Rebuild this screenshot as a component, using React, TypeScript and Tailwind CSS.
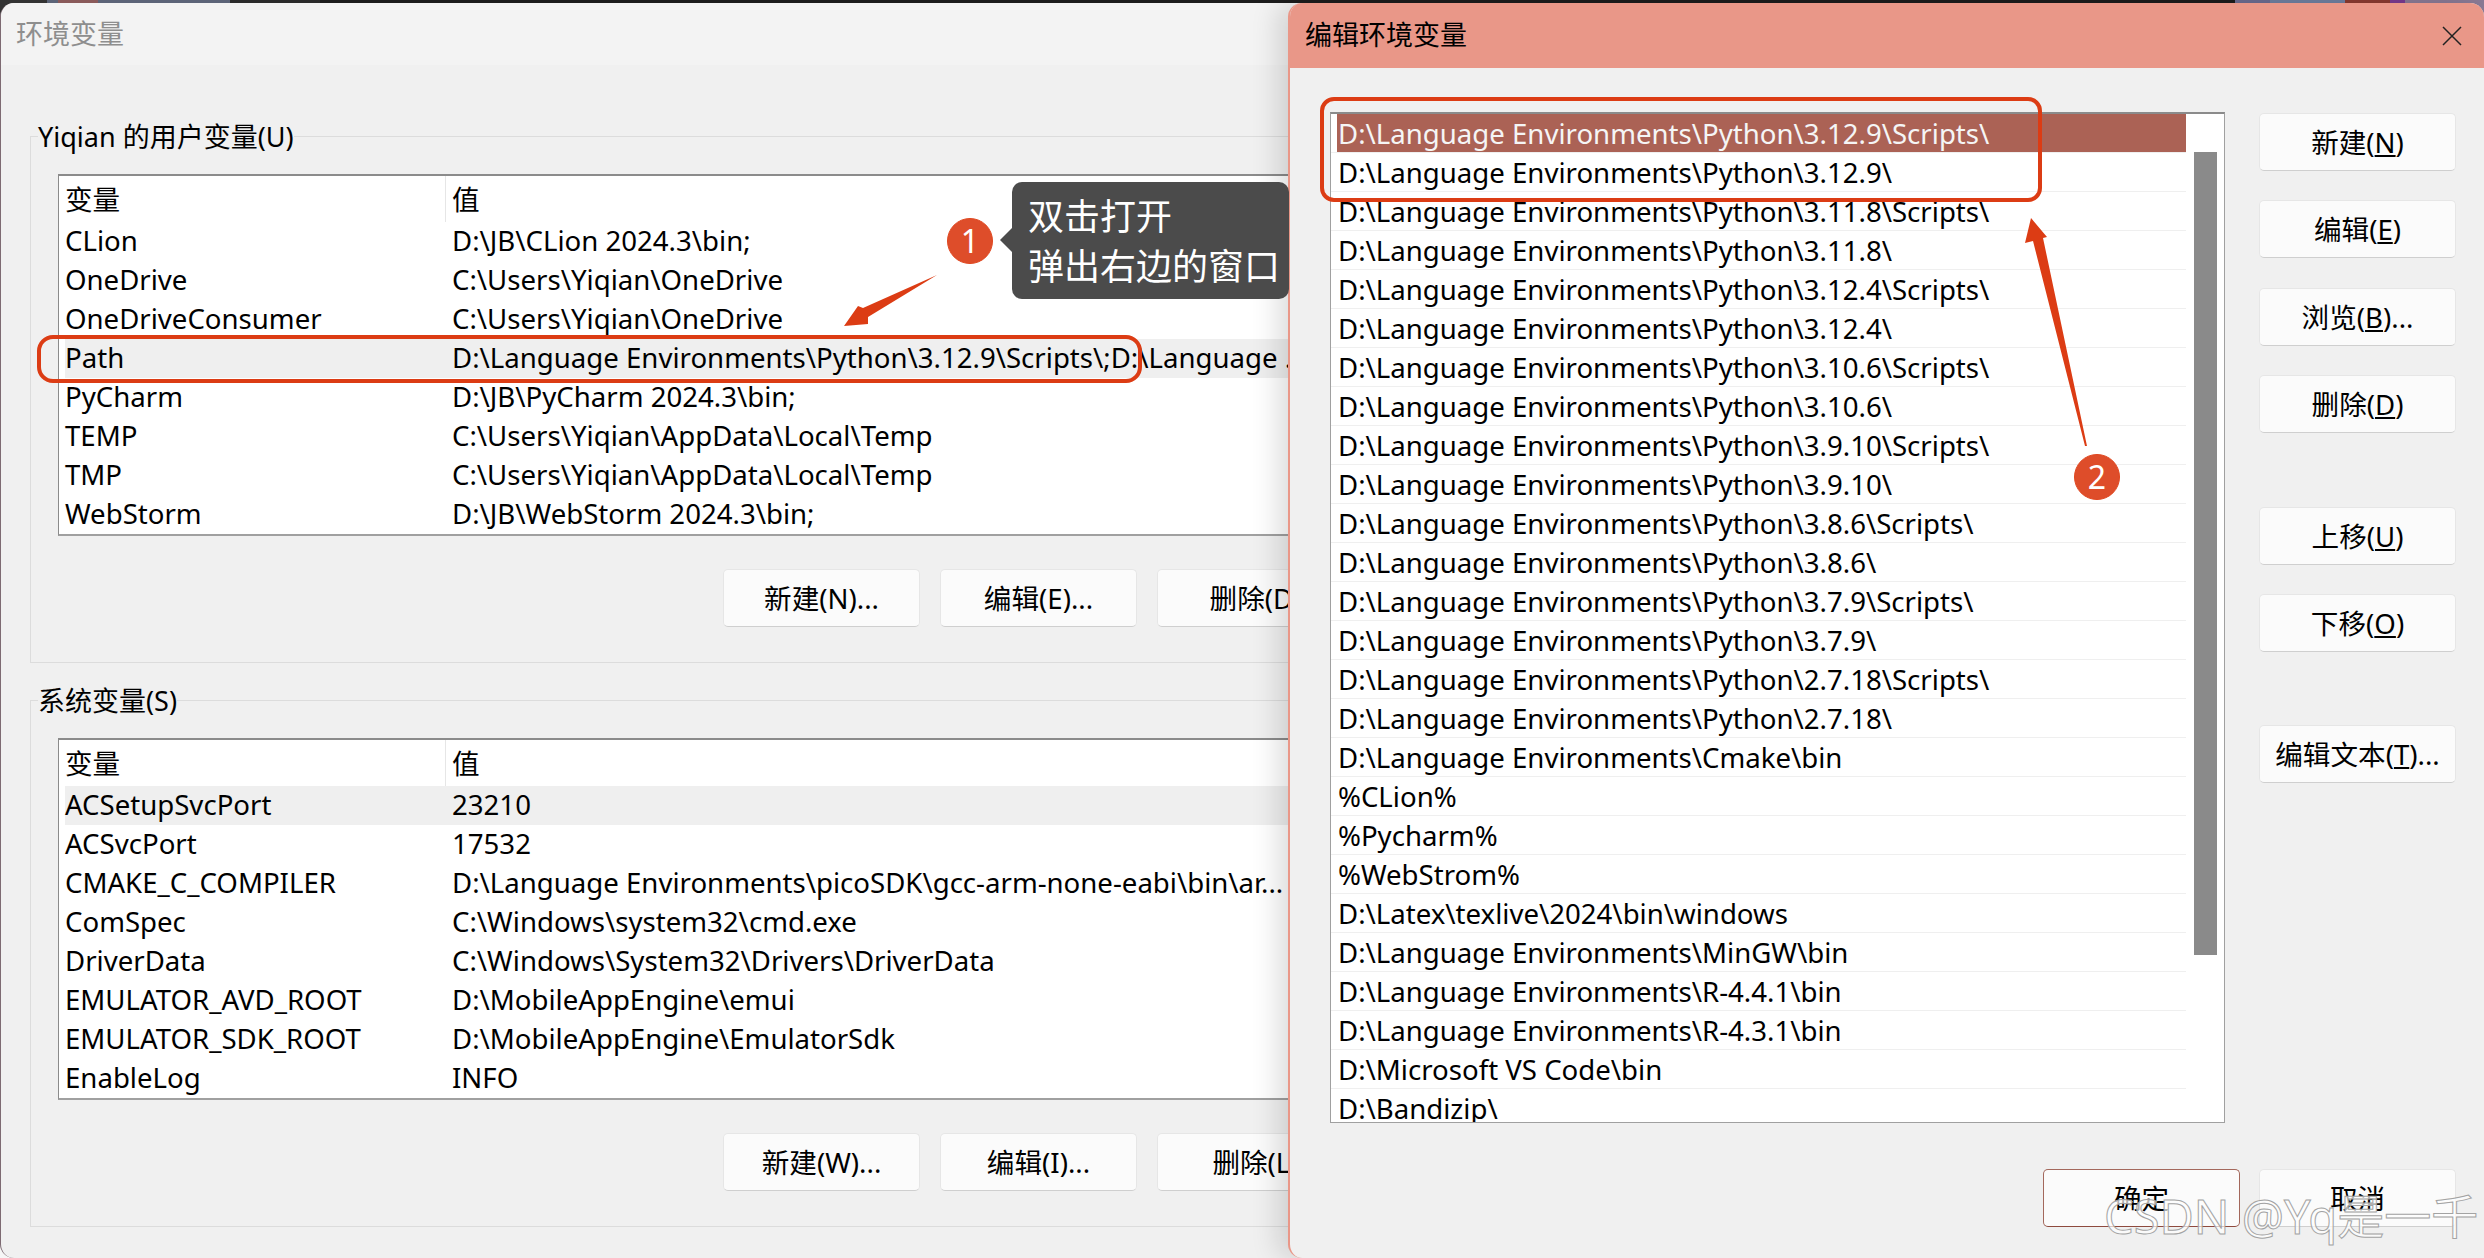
const font = "font-['Noto_Sans','Noto_Sans_CJK_SC',sans-serif]";

const userVars = [
  ["CLion", "D:\\JB\\CLion 2024.3\\bin;"],
  ["OneDrive", "C:\\Users\\Yiqian\\OneDrive"],
  ["OneDriveConsumer", "C:\\Users\\Yiqian\\OneDrive"],
  ["Path", "D:\\Language Environments\\Python\\3.12.9\\Scripts\\;D:\\Language ..."],
  ["PyCharm", "D:\\JB\\PyCharm 2024.3\\bin;"],
  ["TEMP", "C:\\Users\\Yiqian\\AppData\\Local\\Temp"],
  ["TMP", "C:\\Users\\Yiqian\\AppData\\Local\\Temp"],
  ["WebStorm", "D:\\JB\\WebStorm 2024.3\\bin;"],
];

const systemVars = [
  ["ACSetupSvcPort", "23210"],
  ["ACSvcPort", "17532"],
  ["CMAKE_C_COMPILER", "D:\\Language Environments\\picoSDK\\gcc-arm-none-eabi\\bin\\ar..."],
  ["ComSpec", "C:\\Windows\\system32\\cmd.exe"],
  ["DriverData", "C:\\Windows\\System32\\Drivers\\DriverData"],
  ["EMULATOR_AVD_ROOT", "D:\\MobileAppEngine\\emui"],
  ["EMULATOR_SDK_ROOT", "D:\\MobileAppEngine\\EmulatorSdk"],
  ["EnableLog", "INFO"],
];

const paths = [
  "D:\\Language Environments\\Python\\3.12.9\\Scripts\\",
  "D:\\Language Environments\\Python\\3.12.9\\",
  "D:\\Language Environments\\Python\\3.11.8\\Scripts\\",
  "D:\\Language Environments\\Python\\3.11.8\\",
  "D:\\Language Environments\\Python\\3.12.4\\Scripts\\",
  "D:\\Language Environments\\Python\\3.12.4\\",
  "D:\\Language Environments\\Python\\3.10.6\\Scripts\\",
  "D:\\Language Environments\\Python\\3.10.6\\",
  "D:\\Language Environments\\Python\\3.9.10\\Scripts\\",
  "D:\\Language Environments\\Python\\3.9.10\\",
  "D:\\Language Environments\\Python\\3.8.6\\Scripts\\",
  "D:\\Language Environments\\Python\\3.8.6\\",
  "D:\\Language Environments\\Python\\3.7.9\\Scripts\\",
  "D:\\Language Environments\\Python\\3.7.9\\",
  "D:\\Language Environments\\Python\\2.7.18\\Scripts\\",
  "D:\\Language Environments\\Python\\2.7.18\\",
  "D:\\Language Environments\\Cmake\\bin",
  "%CLion%",
  "%Pycharm%",
  "%WebStrom%",
  "D:\\Latex\\texlive\\2024\\bin\\windows",
  "D:\\Language Environments\\MinGW\\bin",
  "D:\\Language Environments\\R-4.4.1\\bin",
  "D:\\Language Environments\\R-4.3.1\\bin",
  "D:\\Microsoft VS Code\\bin",
  "D:\\Bandizip\\",
];

function VarRow({ name, value, active }: { name: string; value: string; active?: boolean }) {
  return (
    <div className={`flex h-[39px] items-center whitespace-nowrap pb-[1px] ${active ? "bg-[#efefef]" : ""}`}>
      <div className="w-[387px] flex-none">{name}</div>
      <div>{value}</div>
    </div>
  );
}

function VarGroup({
  legend,
  rows,
  activeIndex,
  buttons,
  className,
}: {
  legend: string;
  rows: string[][];
  activeIndex: number;
  buttons: string[];
  className: string;
}) {
  return (
    <fieldset className={`ml-[29px] w-[1400px] border border-[#dcdcdc] pl-[27px] ${className}`}>
      <legend className="-ml-[20px] h-[39px] whitespace-nowrap text-[27px] leading-[39px]">{legend}</legend>
      <div className="mt-[18px] border-l border-t-2 border-b-2 border-[#8b8b8b] border-b-[#a0a0a0] bg-white pl-[6px]">
        <div className="flex h-[46px] items-center">
          <div className="flex h-full w-[381px] flex-none items-center border-r border-[#e6e6e6] pt-[1px]">变量</div>
          <div className="pl-[6px] pt-[1px]">值</div>
        </div>
        {rows.map((r, i) => (
          <VarRow key={r[0]} name={r[0]} value={r[1]} active={i === activeIndex} />
        ))}
      </div>
      <div className="mt-[33px] flex gap-[20px] pl-[665px]">
        {buttons.map((b) => (
          <Btn key={b} className="w-[197px]">
            {b}
          </Btn>
        ))}
      </div>
    </fieldset>
  );
}

function Btn({
  children,
  className = "",
  primary,
}: {
  children: React.ReactNode;
  className?: string;
  primary?: boolean;
}) {
  const edge = primary ? "border-[#a3685c] border-b-[#8e4a3e]" : "border-[#e6e6e6] border-b-[#cfcfcf]";
  return (
    <button
      className={`flex h-[58px] flex-none items-center justify-center rounded-[5px] border ${edge} bg-[#fbfbfb] pt-[2px] whitespace-nowrap ${className}`}
    >
      {children}
    </button>
  );
}

function SideBtn({ label, mark, rest, className = "" }: { label: string; mark: string; rest: string; className?: string }) {
  return (
    <Btn className={`w-[197px] ${className}`}>
      {label}(<span className="underline underline-offset-2">{mark}</span>){rest}
    </Btn>
  );
}

function Annotations() {
  return (
    <div className="pointer-events-none absolute inset-0 z-20">
      {/* red frames */}
      <div className="absolute left-[37px] top-[335px] h-[48px] w-[1105px] rounded-[16px] border-4 border-[#dc3c14]" />
      <div className="absolute left-[1320px] top-[97px] h-[105px] w-[722px] rounded-[14px] border-4 border-[#dc3c14]" />

      {/* arrows */}
      <svg className="absolute left-0 top-0" width="2484" height="1258" fill="#dc3c14">
        <polygon points="937,275 868,317 868,324 844,326 858,306 863,308" />
        <polygon points="2087,446 2043,238 2047,237 2031,218 2025,243 2033,241 2085,446" />
      </svg>

      {/* numbered markers */}
      <div className="absolute left-[947px] top-[218px] flex h-[46px] w-[46px] items-center justify-center rounded-full border border-[#e0471f] bg-[#de4d2a] text-[32px] text-white">
        1
      </div>
      <div className="absolute left-[2074px] top-[454px] flex h-[46px] w-[46px] items-center justify-center rounded-full border border-[#e0471f] bg-[#de4d2a] text-[32px] text-white">
        2
      </div>

      {/* callout */}
      <div className="absolute left-[1012px] top-[182px] h-[117px] w-[277px] rounded-[10px] bg-[#4b4b4b] pl-[16px] pt-[10px] text-[36px] leading-[50px] text-white">
        <div className="absolute left-[-12px] top-[46px] h-0 w-0 border-y-[12px] border-r-[12px] border-y-transparent border-r-[#4b4b4b]" />
        <div>双击打开</div>
        <div className="whitespace-nowrap">弹出右边的窗口</div>
      </div>

      {/* watermark */}
      <div className="absolute left-[2104px] top-[1186px] whitespace-nowrap text-[47px] leading-[60px] text-[#ffffffb0] [-webkit-text-stroke:1px_#a3a3a3]">
        CSDN @Yq是一千
      </div>
    </div>
  );
}

export default function App() {
  return (
    <div className={`relative h-[1258px] w-[2484px] overflow-hidden bg-[#f6f6f6] text-[27.6px] text-black ${font}`}>
      {/* sliver of desktop behind the windows */}
      <div className="flex h-[17px] bg-[#232323]">
        <div className="h-full w-[47px] bg-[#333333]" />
        <div className="h-full w-[11px] bg-[#5c6478]" />
        <div className="h-full w-[40px] bg-[#8a5a5a]" />
        <div className="h-full w-[132px] bg-[#5c6478]" />
        <div className="h-full w-[90px] bg-[#2b2b2b]" />
        <div className="h-full w-[1915px] bg-[#1c1c1c]" />
        <div className="h-full w-[35px] bg-[#6c6c90]" />
        <div className="h-full w-[75px] bg-[#6f7fa0]" />
        <div className="h-full w-[45px] bg-[#8a3a30]" />
        <div className="h-full w-[15px] bg-[#7a3a90]" />
        <div className="h-full flex-1 bg-[#8a7a95]" />
      </div>
      <div className="relative -mt-[14px] flex h-[1255px]">
        <div className="relative h-full w-[1300px] flex-none overflow-hidden rounded-l-[14px] border-l border-[#7d6a72] bg-[#f0f0f0]">
          <div className="flex h-[62px] items-center bg-[#f3f3f3] pl-[15px] text-[27px] text-[#8e8e8e]">环境变量</div>
          <div className="pt-[52px]">
            <VarGroup
              legend="Yiqian 的用户变量(U)"
              rows={userVars}
              activeIndex={3}
              buttons={["新建(N)...", "编辑(E)...", "删除(D)"]}
              className="h-[546px]"
            />
            <VarGroup
              legend="系统变量(S)"
              rows={systemVars}
              activeIndex={0}
              buttons={["新建(W)...", "编辑(I)...", "删除(L)"]}
              className="mt-[18px] h-[546px]"
            />
          </div>
        </div>

        <div className="relative z-10 -ml-[12px] flex h-full w-[1196px] flex-none flex-col overflow-hidden rounded-t-[14px] rounded-bl-[14px] border-l-2 border-[#e99788] bg-[#f0f0f0] shadow-[-10px_0_28px_rgba(0,0,0,0.14)]">
          <div className="flex h-[65px] flex-none items-center justify-between bg-[#e99788] pl-[15px] pr-[22px] text-[27px]">
            <span>编辑环境变量</span>
            <svg width="20" height="20" viewBox="0 0 20 20" stroke="#222" strokeWidth="1.5" fill="none">
              <path d="M1 1 L19 19 M19 1 L1 19" />
            </svg>
          </div>
          <div className="flex flex-1">
            <div className="ml-[40px] mt-[44px] flex h-[1011px] w-[895px] flex-none overflow-hidden border border-t-2 border-[#a0a0a0] border-t-[#8b8b8b] bg-white">
              <div className="w-[855px] flex-none">
                {paths.map((p, i) => (
                  <div key={p} className="h-[39px] border-b border-[#efefef]">
                    <div
                      className={`ml-[6px] flex h-[38px] items-center whitespace-nowrap pl-[1px] pt-[2px] ${
                        i === 0 ? "bg-[#ab6255] text-[#f5f5f5]" : ""
                      }`}
                    >
                      {p}
                    </div>
                  </div>
                ))}
              </div>
              <div className="ml-[8px] w-[23px] flex-none pt-[38px]">
                <div className="h-[803px] bg-[#8a8a8a]" />
              </div>
            </div>

            <div className="ml-[34px] mt-[45px] flex flex-col">
              <SideBtn label="新建" mark="N" rest="" />
              <SideBtn label="编辑" mark="E" rest="" className="mt-[29px]" />
              <SideBtn label="浏览" mark="B" rest="..." className="mt-[30px]" />
              <SideBtn label="删除" mark="D" rest="" className="mt-[29px]" />
              <SideBtn label="上移" mark="U" rest="" className="mt-[74px]" />
              <SideBtn label="下移" mark="O" rest="" className="mt-[29px]" />
              <SideBtn label="编辑文本" mark="T" rest="..." className="mt-[73px]" />
            </div>
          </div>
          <div className="absolute left-[753px] top-[1166px] flex gap-[19px]">
            <Btn primary className="w-[197px]">
              确定
            </Btn>
            <Btn className="w-[197px]">取消</Btn>
          </div>
        </div>
      </div>
      <Annotations />
    </div>
  );
}
